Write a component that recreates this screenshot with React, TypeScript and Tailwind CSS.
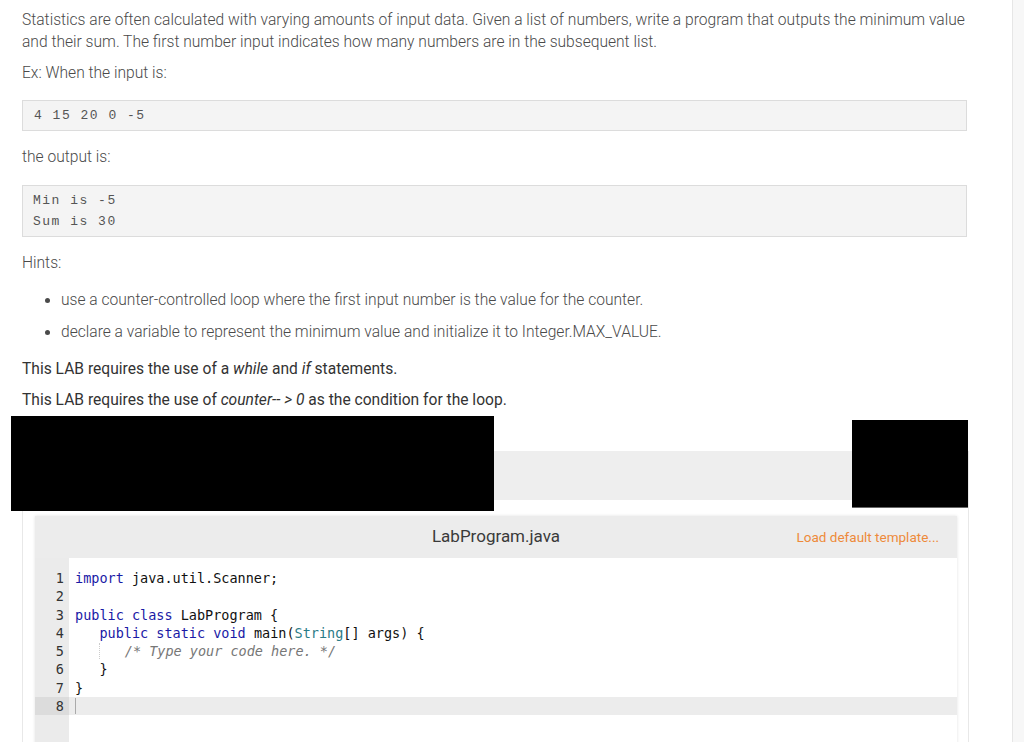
import React from "react";

const sans = { fontFamily: "Roboto, 'Liberation Sans', sans-serif" };
const mono = { fontFamily: "'Liberation Mono', 'DejaVu Sans Mono', monospace" };
const codeFont = { fontFamily: "'DejaVu Sans Mono', 'Liberation Mono', monospace" };

const K = ({ children }: { children: React.ReactNode }) => (
  <span className="text-[#1a1aa6]">{children}</span>
);

function CodeEditor() {
  const lines: React.ReactNode[] = [
    <><K>import</K> java.util.Scanner;</>,
    <>&nbsp;</>,
    <><K>public</K> <K>class</K> LabProgram {"{"}</>,
    <>{"   "}<K>public</K> <K>static</K> <K>void</K> main(<span className="text-[#2a7b87]">String</span>[] args) {"{"}</>,
    <>
      {"   "}
      <span className="border-l border-dotted border-[#ccc]">{"   "}</span>
      <span className="italic text-[#777]">/* Type your code here. */</span>
    </>,
    <>{"   }"}</>,
    <>{"}"}</>,
    <>&nbsp;</>,
  ];

  return (
    <div className="mx-3 mr-[11px] mt-4 bg-white shadow-[0_0_3px_rgba(0,0,0,0.12)]">
      <div className="relative flex h-[42px] items-center justify-center bg-[#ececec]">
        <span className="text-[17px] text-[#3a3a3a]" style={sans}>LabProgram.java</span>
        <span className="absolute right-[18px] text-[13.5px] text-[#ee8a3a]" style={sans}>
          Load default template...
        </span>
      </div>
      <div className="flex h-[200px] text-[13.5px] leading-[18.3px] text-[#111]" style={codeFont}>
        <div className="w-[34px] bg-[#ebebeb] pt-[11px] text-right text-[#333]">
          {lines.map((_, i) => (
            <div key={i} className={`pr-[5px] ${i === 7 ? "bg-[#dcdcdc]" : ""}`}>
              {i + 1}
            </div>
          ))}
        </div>
        <div className="flex-1 pt-[11px]">
          {lines.map((l, i) => (
            <div
              key={i}
              className={`whitespace-pre pl-[6px] ${i === 7 ? "bg-[#ececec]" : ""}`}
            >
              {i === 7 ? <span className="border-l border-[#aaa]">&nbsp;</span> : l}
            </div>
          ))}
        </div>
      </div>
    </div>
  );
}

export default function App() {
  return (
    <div className="relative flex h-[742px] w-[1024px] overflow-hidden bg-white">
      <main className="flex-1 pl-[22px] pt-[9px]" style={sans}>
        <div className="w-[945px] text-[15.6px] leading-[22px] font-light text-[#4a4a4a]">
          <p>
            Statistics are often calculated with varying amounts of input data. Given a list of numbers, write a
            program that outputs the minimum value and their sum. The first number input indicates how many numbers
            are in the subsequent list.
          </p>
          <p className="mt-[9px]">Ex: When the input is:</p>
          <pre
            className="mt-4 h-[31px] border border-[#dcdcdc] bg-[#f4f4f4] pl-[11px] pt-[5px] text-[13px] leading-[19px] tracking-[1.5px] text-[#555]"
            style={mono}
          >
            4 15 20 0 -5
          </pre>
          <p className="mt-[15px]">the output is:</p>
          <pre
            className="mt-[17px] h-[52px] border border-[#dcdcdc] bg-[#f4f4f4] pl-[10px] pt-[4px] text-[13px] leading-[21px] tracking-[1.5px] text-[#555]"
            style={mono}
          >
            {"Min is -5\nSum is 30"}
          </pre>
          <p className="mt-[15px]">Hints:</p>
          <ul className="ml-[39px] mt-[15px] list-disc">
            <li>use a counter-controlled loop where the first input number is the value for the counter.</li>
            <li className="mt-[10px]">
              declare a variable to represent the minimum value and initialize it to Integer.MAX_VALUE.
            </li>
          </ul>
          <p className="mt-[15px] font-normal text-[#333]">
            This LAB requires the use of a <i>while</i> and <i>if</i> statements.
          </p>
          <p className="mt-[9px] font-normal text-[#333]">
            This LAB requires the use of <i>counter-- &gt; 0</i> as the condition for the loop.
          </p>
        </div>

        <div className="mt-10 w-[947px] border-x border-[#e8e8e8] bg-white">
          <div className="h-[49px] bg-[#eeeeee]" />
          <CodeEditor />
        </div>
      </main>
      <aside className="w-[12px] border-l border-[#e6e6e6] bg-[#f7f7f7]" />

      {/* redacted blocks in the screenshot */}
      <div className="absolute left-[11px] top-[416px] h-[95px] w-[483px] bg-black" />
      <div className="absolute left-[852px] top-[420px] h-[88px] w-[116px] border-b border-[#666] bg-black" />
    </div>
  );
}
